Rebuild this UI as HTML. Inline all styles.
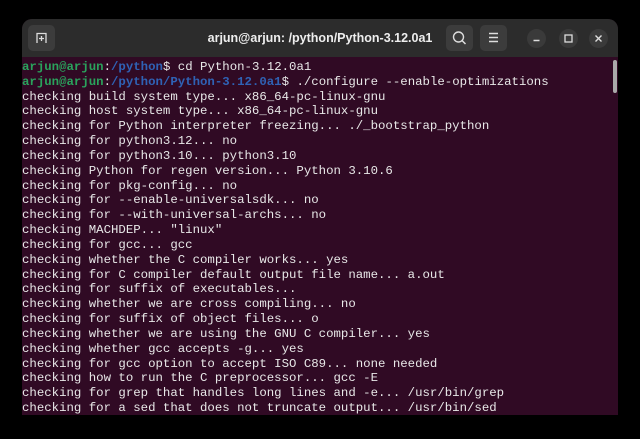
<!DOCTYPE html>
<html><head><meta charset="utf-8"><style>
body{margin:0;width:640px;height:439px;background:#000;position:relative;overflow:hidden}
.win{position:absolute;left:22px;top:19px;width:596px;height:396px;border-radius:10px 10px 0 0;overflow:hidden;background:#300a24}
.tb{position:absolute;left:0;top:0;width:596px;height:38px;background:#2c2c2c}
.title{position:absolute;left:0;width:596px;top:0;text-align:center;color:#eee;font:bold 12.5px/38px "Liberation Sans",sans-serif}
.btn{position:absolute;top:6px;width:27px;height:26px;background:#3c3c3c;border-radius:5px}
.cb{position:absolute;top:10px;width:19px;height:19px;border-radius:50%;background:#3a3a3a}
.term{position:absolute;left:0;top:41px;font:12.37px/14.83px "Liberation Mono",monospace;color:#e8e8e8;white-space:pre}
.g{color:#2aa35c;font-weight:bold}.b{color:#2f62b5;font-weight:bold}
.sb{position:absolute;left:591px;top:41px;width:4px;height:33px;background:#aaa;border-radius:2px}
</style></head><body>
<div class="win">
<div class="tb">
<div class="btn" style="left:6px"><svg width="27" height="26"><path d="M9 18V8.5h9V18" fill="none" stroke="#ddd" stroke-width="1.3"/><path d="M13.5 11v5M11 13.5h5" stroke="#ddd" stroke-width="1.3"/></svg></div>
<div class="title">arjun@arjun: /python/Python-3.12.0a1</div>
<div class="btn" style="left:424px"><svg width="27" height="26"><circle cx="12.5" cy="12" r="5" fill="none" stroke="#ddd" stroke-width="1.4"/><path d="M16 15.5l3.5 3.5" stroke="#ddd" stroke-width="1.5"/></svg></div>
<div class="btn" style="left:458px"><svg width="27" height="26"><path d="M9 8.5h9M9 12.5h9M9 16.5h9" stroke="#ddd" stroke-width="1.4"/></svg></div>
<div class="cb" style="left:505px"><svg width="19" height="19"><path d="M6.5 11.5h6" stroke="#ddd" stroke-width="1.4"/></svg></div>
<div class="cb" style="left:537px"><svg width="19" height="19"><rect x="6" y="6" width="7" height="7" fill="none" stroke="#ddd" stroke-width="1.3"/></svg></div>
<div class="cb" style="left:567px"><svg width="19" height="19"><path d="M6.5 6.5l6 6M12.5 6.5l-6 6" stroke="#ddd" stroke-width="1.4"/></svg></div>
</div>
<div class="sb"></div>
<div class="term"><span class="g">arjun@arjun</span>:<span class="b">/python</span>$ cd Python-3.12.0a1
<span class="g">arjun@arjun</span>:<span class="b">/python/Python-3.12.0a1</span>$ ./configure --enable-optimizations
checking build system type... x86_64-pc-linux-gnu
checking host system type... x86_64-pc-linux-gnu
checking for Python interpreter freezing... ./_bootstrap_python
checking for python3.12... no
checking for python3.10... python3.10
checking Python for regen version... Python 3.10.6
checking for pkg-config... no
checking for --enable-universalsdk... no
checking for --with-universal-archs... no
checking MACHDEP... "linux"
checking for gcc... gcc
checking whether the C compiler works... yes
checking for C compiler default output file name... a.out
checking for suffix of executables...
checking whether we are cross compiling... no
checking for suffix of object files... o
checking whether we are using the GNU C compiler... yes
checking whether gcc accepts -g... yes
checking for gcc option to accept ISO C89... none needed
checking how to run the C preprocessor... gcc -E
checking for grep that handles long lines and -e... /usr/bin/grep
checking for a sed that does not truncate output... /usr/bin/sed</div>
</div>
</body></html>
